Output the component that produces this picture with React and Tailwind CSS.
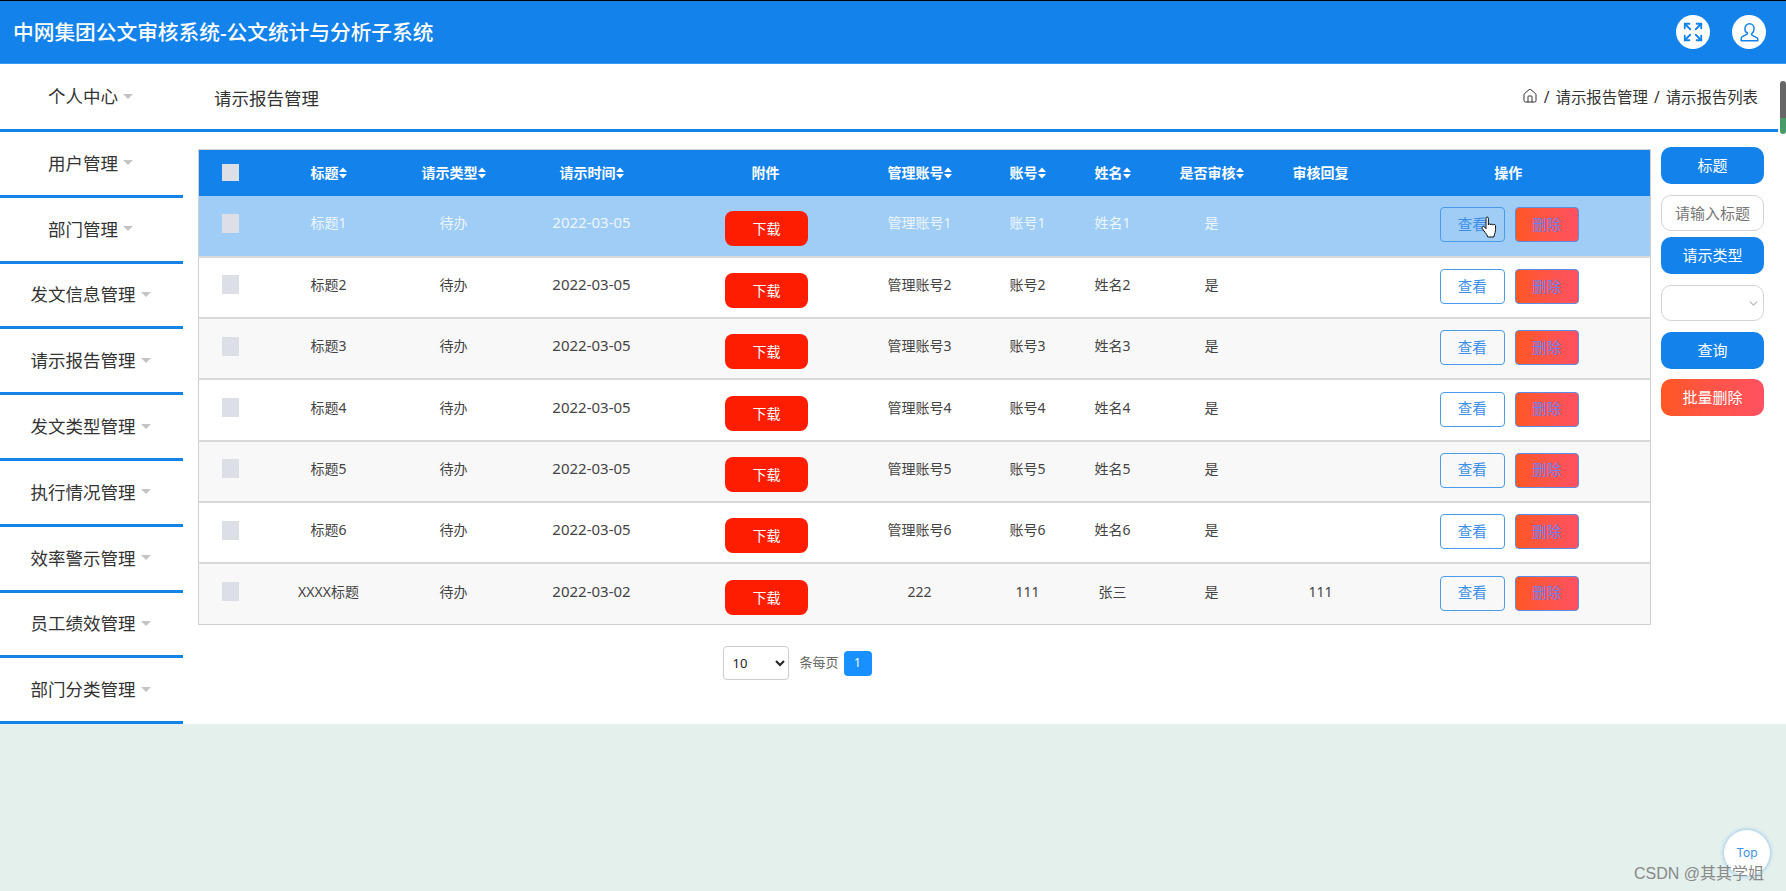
import React from "react";
import { Expand, House, ChevronDown } from "lucide-react";

const menu = ["个人中心","用户管理","部门管理","发文信息管理","请示报告管理","发文类型管理","执行情况管理","效率警示管理","员工绩效管理","部门分类管理"];
const cols = [
  ["标题", true, "w-[132px]"],
  ["请示类型", true, "w-[118px]"],
  ["请示时间", true, "w-[158px]"],
  ["附件", false, "w-[190px]"],
  ["管理账号", true, "w-[118px]"],
  ["账号", true, "w-[98px]"],
  ["姓名", true, "w-[72px]"],
  ["是否审核", true, "w-[126px]"],
  ["审核回复", false, "w-[92px]"],
  ["操作", false, "w-[284px]"],
];
const rows = [1,2,3,4,5,6].map(i => ["标题"+i,"待办","2022-03-05","管理账号"+i,"账号"+i,"姓名"+i,"是",""]);
rows.push(["XXXX标题","待办","2022-03-02","222","111","张三","是","111"]);

function Sort() {
  return (
    <svg width="8" height="12" viewBox="0 0 8 12" className="inline-block align-[-1px]" fill="#fff">
      <path d="M4 0.5 8 5H0zM4 11.5 0 7h8z" />
    </svg>
  );
}
function Caret() {
  return <span className="inline-block ml-[5px] align-[3px] border-x-[5px] border-t-[5px] border-x-transparent border-t-[#c4c4c4]" />;
}
function UserIcon() {
  return (
    <svg width="21" height="21" viewBox="0 0 24 24" fill="none" stroke="#1383eb" strokeWidth="1.7" strokeLinejoin="round">
      <path d="M12 2c3.2 0 5.2 2.5 5.2 5.6 0 2.3-1 4.3-2.3 5.4-.7.6-.6 1.800.3 2.300l5.100 2.600c.9.5 1.200 1.100 1.200 2.100v1.500H2.500V18.900c0-1 .3-1.600 1.200-2.100l5.100-2.600c.9-.5 1-1.700.3-2.300C7.800 11.800 6.800 9.900 6.800 7.600 6.800 4.500 8.800 2 12 2z" />
    </svg>
  );
}
function HandCursor() {
  return (
    <svg width="18" height="24" viewBox="0 0 18 24" className="absolute left-[41px] top-[9px]">
      <path d="M5 2.200c0-1.600 2.400-1.600 2.400 0V9c.2-1.500 2.300-1.400 2.400 0 .2-1.300 2.200-1.200 2.400.2.300-1.100 2.200-1 2.300.4.200 2.600.2 5-.4 7-.5 1.700-1 2.700-1.300 4.400H6.800c-.4-1.800-1.500-3-2.700-4.600L1.300 12.600c-1-1.600.900-2.900 2.100-1.700L5 12.700z" fill="#fff" stroke="#111" strokeWidth="1" strokeLinejoin="round" />
    </svg>
  );
}

function SideButton({ children, className }) {
  return <div className={"h-[37px] rounded-[10px] flex items-center justify-center text-[15px] text-white " + className}>{children}</div>;
}

function Row({ r, i }) {
  const bg = i === 0 ? "bg-[#9fcdf6]" : i % 2 === 1 ? "bg-white" : "bg-[#f8f8f8]";
  const tc = i === 0 ? "text-[#eef6fd]" : "text-[#444]";
  const td = "p-0 pb-[6px] text-center align-middle " + tc;
  const cell = v => <td className={td}>{v}</td>;
  return (
    <tr className={"h-[61.3px] border-b-2 border-[#d9d9d9] last:border-b-0 " + bg}>
      <td className="p-0 pb-[5px] align-middle"><div className="w-[17px] h-[19px] ml-[23px] bg-[#dcdfe6]" /></td>
      {cell(r[0])}{cell(r[1])}
      <td className={td + " text-[15px]"}>{r[2]}</td>
      <td className="p-0 pt-[6px] pl-[2px] align-middle">
        <button className="block mx-auto w-[83px] h-[35px] rounded-[8px] bg-[#ff1d00] text-white text-[14px]">下载</button>
      </td>
      {cell(r[3])}{cell(r[4])}{cell(r[5])}{cell(r[6])}{cell(r[7])}
      <td className="p-0 pb-[2px] align-middle">
        <div className="flex justify-center gap-[10px] pl-[2px]">
          <div className="relative">
            <button className={"block w-[65px] h-[35px] rounded-[4px] border border-[#4a9be8] text-[#3d8fe8] text-[14.5px] " + (i === 0 ? "bg-[#9fcdf6]" : "bg-transparent")}>查看</button>
            {i === 0 && <HandCursor />}
          </div>
          <button className="block w-[64px] h-[35px] rounded-[4px] border border-[#5b8de0] bg-gradient-to-r from-[#ff5722] to-[#ff5160] text-[#6f7ff0] text-[14.5px]">删除</button>
        </div>
      </td>
    </tr>
  );
}

export default function App() {
  return (
    <div className="relative h-[891px] overflow-hidden bg-[#e4f0ec] font-['Noto_Sans','Noto_Sans_CJK_SC',sans-serif] text-[14px]">
      <header className="h-[64px] border-t border-black border-b border-b-[#3a9af0] bg-[#1383eb] flex items-center justify-between pl-[13px] pr-[20px]">
        <h1 className="pt-[1px] text-[20.7px] font-medium text-white">中网集团公文审核系统-公文统计与分析子系统</h1>
        <div className="flex items-center gap-[22px]">
          <div className="w-[34px] h-[34px] rounded-full bg-white flex items-center justify-center"><Expand size={22} color="#1383eb" strokeWidth={2} /></div>
          <div className="w-[34px] h-[34px] rounded-full bg-white flex items-center justify-center"><UserIcon /></div>
        </div>
      </header>

      <div className="flex bg-white h-[660px]">
        <nav className="w-[183px] shrink-0">
          {menu.map((m, i) => (
            <div key={m} className={"flex items-center justify-center text-[17.5px] text-[#333] border-b-[3px] border-[#1383eb] pb-[1px] pr-[2px] " + (i === 0 ? "h-[68px]" : "h-[65.8px]")}>
              {m}<Caret />
            </div>
          ))}
        </nav>

        <main className="flex-1 min-w-0">
          <div className="h-[68px] mr-[8px] border-b-[3px] border-[#1383eb] flex items-center justify-between pl-[31px] pr-[20px] pt-[3px]">
            <span className="text-[17.5px] text-[#333]">请示报告管理</span>
            <span className="flex items-center gap-[6px] text-[15.4px] text-[#333]">
              <House size={16} strokeWidth={1.5} color="#333" className="-mt-[3px]" />
              <span>/</span>
              <span>请示报告管理</span>
              <span>/</span>
              <span>请示报告列表</span>
            </span>
          </div>

          <div className="flex pt-[17px] pl-[15px] gap-[10px]">
            <div className="w-[1453px] shrink-0">
              <table className="w-full table-fixed border border-[#d0d0d0] border-collapse">
                <thead>
                  <tr className="h-[46px] bg-[#1383eb]">
                    <th className="w-[64px] p-0"><div className="w-[17px] h-[17px] ml-[23px] bg-[#dcdfe6]" /></th>
                    {cols.map(([t, s, w]) => (
                      <th key={t} className={"p-0 text-center text-white text-[14px] font-bold " + w}>
                        {t}{s && <Sort />}
                      </th>
                    ))}
                  </tr>
                </thead>
                <tbody>
                  {rows.map((r, i) => <Row key={i} r={r} i={i} />)}
                </tbody>
              </table>
              <div className="flex items-center justify-center gap-[5px] mt-[21px] pr-[254px]">
                <select defaultValue="10" className="w-[66px] h-[34px] pl-[4px] border border-[#ccc] rounded-[4px] bg-white text-[13px] text-[#222]">
                  <option>10</option>
                </select>
                <span className="ml-[5px] text-[13px] text-[#666]">条每页</span>
                <span className="w-[28px] h-[25px] rounded-[4px] bg-[#1890ff] text-white text-[12px] flex items-center justify-center">1</span>
              </div>
            </div>

            <aside className="w-[103px] shrink-0 flex flex-col">
              <SideButton className="bg-[#1383eb] -mt-[2px]">标题</SideButton>
              <input placeholder="请输入标题" className="mt-[11px] h-[36px] w-full rounded-[10px] border border-[#d4d4d4] bg-white text-center text-[15px] placeholder:text-[#777] outline-none" />
              <SideButton className="bg-[#1383eb] mt-[6px]">请示类型</SideButton>
              <div className="relative mt-[11px] h-[36px]">
                <select className="w-full h-full appearance-none rounded-[10px] border border-[#d4d4d4] bg-white" />
                <ChevronDown size={13} color="#bbb" strokeWidth={2.5} className="absolute right-[4px] top-[12px]" />
              </div>
              <SideButton className="bg-[#1383eb] mt-[11px]">查询</SideButton>
              <SideButton className="bg-gradient-to-r from-[#ff5722] to-[#ff5160] mt-[10px]">批量删除</SideButton>
            </aside>
          </div>
        </main>
      </div>

      <div className="absolute right-[0px] top-[81px] w-[6px] h-[53px] rounded-[3px] bg-gradient-to-b from-[#666] from-70% to-[#4a9a68] to-70%" />
      <div className="absolute left-[1724px] top-[830px] w-[46px] h-[46px] rounded-full bg-white shadow-[0_0_4px_#7db9ea] flex items-center justify-center text-[12px] text-[#3d8fe8] font-['Inter',sans-serif]">Top</div>
      <div className="absolute left-[1634px] top-[862px] text-[16px] text-[#888] font-['Liberation_Sans','Noto_Sans_CJK_SC',sans-serif]">CSDN @其其学姐</div>
    </div>
  );
}
